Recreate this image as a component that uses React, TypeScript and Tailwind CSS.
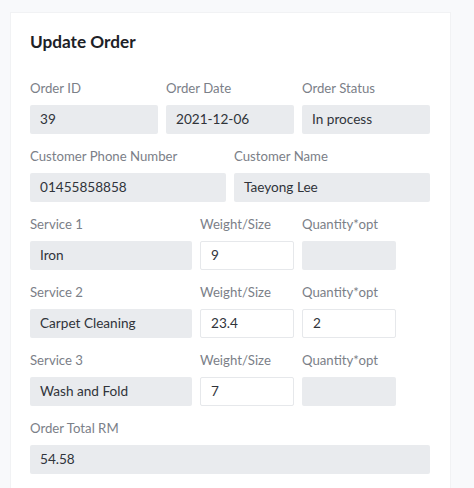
import React from 'react';

type FieldProps = {
    label: string;
    value?: string;
    width: string;
    editable?: boolean;
};

const Field = ({ label, value = '', width, editable }: FieldProps) => (
    <div className={`${width} flex flex-col`}>
        <label className="text-[13.2px] leading-[18px] text-[#7b8088] mb-[8px] whitespace-nowrap">{label}</label>
        <div
            className={`h-[29px] rounded-[2px] pl-[10px] flex items-center text-[13.6px] text-[#30343a] ${
                editable ? 'bg-white border border-[#e6e8eb]' : 'bg-[#e9ebee]'
            }`}
        >
            {value}
        </div>
    </div>
);

export default function App() {
    return (
        <div
            className="w-[474px] h-[488px] overflow-hidden bg-[#f8f9fb] pt-[12px] pl-[10px]"
            style={{ fontFamily: 'Lato, "Noto Sans", sans-serif' }}
        >
            <div className="w-[441px] h-[500px] bg-white border border-[#f1f2f4] pl-[19px] pt-[17px]">
                <h2 className="text-[17.2px] leading-[24px] font-bold text-[#1d2127]">Update Order</h2>

                <div className="mt-[25px] flex gap-[8px]">
                    <Field label="Order ID" value="39" width="w-[128px]" />
                    <Field label="Order Date" value="2021-12-06" width="w-[128px]" />
                    <Field label="Order Status" value="In process" width="w-[128px]" />
                </div>

                <div className="mt-[13px] flex gap-[8px]">
                    <Field label="Customer Phone Number" value="01455858858" width="w-[196px]" />
                    <Field label="Customer Name" value="Taeyong Lee" width="w-[196px]" />
                </div>

                <div className="mt-[13px] flex gap-[8px]">
                    <Field label="Service 1" value="Iron" width="w-[162px]" />
                    <Field label="Weight/Size" value="9" width="w-[94px]" editable />
                    <Field label="Quantity*opt" width="w-[94px]" />
                </div>

                <div className="mt-[13px] flex gap-[8px]">
                    <Field label="Service 2" value="Carpet Cleaning" width="w-[162px]" />
                    <Field label="Weight/Size" value="23.4" width="w-[94px]" editable />
                    <Field label="Quantity*opt" value="2" width="w-[94px]" editable />
                </div>

                <div className="mt-[13px] flex gap-[8px]">
                    <Field label="Service 3" value="Wash and Fold" width="w-[162px]" />
                    <Field label="Weight/Size" value="7" width="w-[94px]" editable />
                    <Field label="Quantity*opt" width="w-[94px]" />
                </div>

                <div className="mt-[13px] flex">
                    <Field label="Order Total RM" value="54.58" width="w-[400px]" />
                </div>
            </div>
        </div>
    );
}
